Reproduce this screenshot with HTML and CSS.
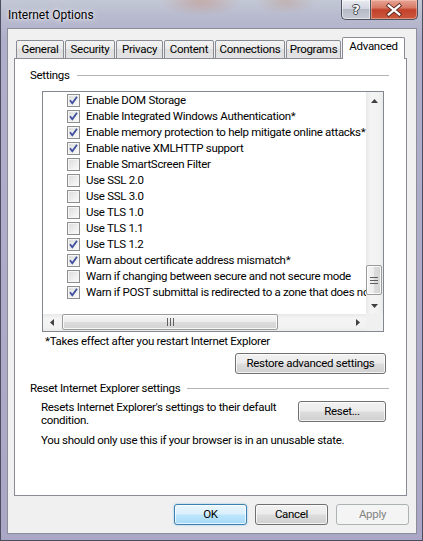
FILE: index.html
```html
<!DOCTYPE html>
<html>
<head>
<meta charset="utf-8">
<title>Internet Options</title>
<link rel="stylesheet" href="styles.css">
</head>
<body>
<div class="window">
  <div class="titlebar">
    <span class="title">Internet Options</span>
    <div class="caption-buttons">
      <div class="cap-btn cap-help"><span class="help-glyph">?</span></div>
      <div class="cap-btn cap-close">
        <svg width="48" height="20" viewBox="0 0 48 20">
          <path d="M18.5 5.5 L29.5 14.5 M29.5 5.5 L18.5 14.5" stroke="#5a2a22" stroke-width="4.2" stroke-linecap="square" fill="none"/>
          <path d="M18.5 5.5 L29.5 14.5 M29.5 5.5 L18.5 14.5" stroke="#ffffff" stroke-width="2.4" stroke-linecap="square" fill="none"/>
        </svg>
      </div>
    </div>
  </div>
  <div class="client">
    <div class="tabs">
      <div class="tab tab-general">General</div>
      <div class="tab tab-security">Security</div>
      <div class="tab tab-privacy">Privacy</div>
      <div class="tab tab-content">Content</div>
      <div class="tab tab-connections">Connections</div>
      <div class="tab tab-programs">Programs</div>
      <div class="tab tab-active">Advanced</div>
    </div>
    <div class="panel">
      <div class="group-head"><span>Settings</span><div class="group-line"></div></div>
      <div class="listbox">
        <div class="list-main">
          <div class="list-view">
            <div class="item"><span class="cb checked"><svg width="11" height="11" viewBox="0 0 11 11"><path d="M2 5.2 L4.3 8.3 L9 1.8" stroke="#3b4f9e" stroke-width="1.8" fill="none"/></svg></span>Enable DOM Storage</div>
            <div class="item"><span class="cb checked"><svg width="11" height="11" viewBox="0 0 11 11"><path d="M2 5.2 L4.3 8.3 L9 1.8" stroke="#3b4f9e" stroke-width="1.8" fill="none"/></svg></span>Enable Integrated Windows Authentication*</div>
            <div class="item"><span class="cb checked"><svg width="11" height="11" viewBox="0 0 11 11"><path d="M2 5.2 L4.3 8.3 L9 1.8" stroke="#3b4f9e" stroke-width="1.8" fill="none"/></svg></span>Enable memory protection to help mitigate online attacks*</div>
            <div class="item"><span class="cb checked"><svg width="11" height="11" viewBox="0 0 11 11"><path d="M2 5.2 L4.3 8.3 L9 1.8" stroke="#3b4f9e" stroke-width="1.8" fill="none"/></svg></span>Enable native XMLHTTP support</div>
            <div class="item"><span class="cb"></span>Enable SmartScreen Filter</div>
            <div class="item"><span class="cb"></span>Use SSL 2.0</div>
            <div class="item"><span class="cb"></span>Use SSL 3.0</div>
            <div class="item"><span class="cb"></span>Use TLS 1.0</div>
            <div class="item"><span class="cb"></span>Use TLS 1.1</div>
            <div class="item"><span class="cb checked"><svg width="11" height="11" viewBox="0 0 11 11"><path d="M2 5.2 L4.3 8.3 L9 1.8" stroke="#3b4f9e" stroke-width="1.8" fill="none"/></svg></span>Use TLS 1.2</div>
            <div class="item"><span class="cb checked"><svg width="11" height="11" viewBox="0 0 11 11"><path d="M2 5.2 L4.3 8.3 L9 1.8" stroke="#3b4f9e" stroke-width="1.8" fill="none"/></svg></span>Warn about certificate address mismatch*</div>
            <div class="item"><span class="cb"></span>Warn if changing between secure and not secure mode</div>
            <div class="item"><span class="cb checked"><svg width="11" height="11" viewBox="0 0 11 11"><path d="M2 5.2 L4.3 8.3 L9 1.8" stroke="#3b4f9e" stroke-width="1.8" fill="none"/></svg></span>Warn if POST submittal is redirected to a zone that does not permit posts</div>
          </div>
          <div class="vscroll">
            <div class="sb-arrow"><svg width="7" height="4" viewBox="0 0 7 4"><polygon points="0,4 3.5,0 7,4" fill="#404040"/></svg></div>
            <div class="v-before"></div>
            <div class="v-thumb">
              <svg width="8" height="7" viewBox="0 0 8 7"><path d="M0 0.5 H8 M0 3.5 H8 M0 6.5 H8" stroke="#5e5e5e" stroke-width="1"/></svg>
            </div>
            <div class="v-after"></div>
            <div class="sb-arrow"><svg width="7" height="4" viewBox="0 0 7 4"><polygon points="0,0 7,0 3.5,4" fill="#404040"/></svg></div>
          </div>
        </div>
        <div class="hscroll-row">
          <div class="hscroll">
            <div class="sb-arrow-h"><svg width="4" height="7" viewBox="0 0 4 7"><polygon points="4,0 4,7 0,3.5" fill="#404040"/></svg></div>
            <div class="h-thumb">
              <svg width="7" height="8" viewBox="0 0 7 8"><path d="M0.5 0 V8 M3.5 0 V8 M6.5 0 V8" stroke="#5e5e5e" stroke-width="1"/></svg>
            </div>
            <div class="h-after"></div>
            <div class="sb-arrow-h"><svg width="4" height="7" viewBox="0 0 4 7"><polygon points="0,0 0,7 4,3.5" fill="#404040"/></svg></div>
          </div>
          <div class="sb-corner"></div>
        </div>
      </div>
      <div class="note">*Takes effect after you restart Internet Explorer</div>
      <div class="restore-row"><button class="btn btn-restore">Restore advanced settings</button></div>
      <div class="group-head reset-head"><span>Reset Internet Explorer settings</span><div class="group-line"></div></div>
      <div class="reset-row">
        <p class="reset-text">Resets Internet Explorer's settings to their default<br>condition.</p>
        <button class="btn btn-reset">Reset...</button>
      </div>
      <p class="warn-text">You should only use this if your browser is in an unusable state.</p>
    </div>
    <div class="dialog-buttons">
      <button class="btn btn-dialog btn-default">OK</button>
      <button class="btn btn-dialog">Cancel</button>
      <button class="btn btn-dialog btn-disabled">Apply</button>
    </div>
  </div>
</div>
</body>
</html>
```

FILE: styles.css
```css
html, body {
  margin: 0;
  padding: 0;
}

body {
  width: 423px;
  height: 541px;
  overflow: hidden;
  font-family: Roboto, "Noto Sans", sans-serif;
  font-size: 11.5px;
  letter-spacing: -0.3px;
  color: #000;
}

.window {
  width: 423px;
  height: 541px;
  box-sizing: border-box;
  display: flex;
  flex-direction: column;
  border: 1px solid #4c4e60;
  border-top: none;
  background:
    radial-gradient(ellipse 40px 14px at 200px 2px, rgba(196, 140, 120, 0.45), rgba(196, 140, 120, 0)),
    radial-gradient(ellipse 30px 12px at 285px 2px, rgba(190, 150, 130, 0.4), rgba(190, 150, 130, 0)),
    linear-gradient(180deg, #c3c8d6 0px, #b9bccf 14px, #b0afca 40px, #aaa7c6 100%);
}

.titlebar {
  height: 28px;
  flex: none;
  display: flex;
  justify-content: space-between;
  align-items: flex-start;
}

.title {
  padding-left: 7px;
  line-height: 30px;
  font-size: 12px;
  letter-spacing: 0;
  color: #000;
  text-shadow: 0 0 6px rgba(255, 255, 255, 0.9), 0 0 3px rgba(255, 255, 255, 0.8);
}

.caption-buttons {
  display: flex;
  margin-right: 4px;
}

.cap-btn {
  height: 20px;
  box-sizing: border-box;
  border: 1px solid #4f535f;
  border-top: none;
  display: flex;
  align-items: center;
  justify-content: center;
}

.cap-help {
  width: 29px;
  border-right: none;
  border-radius: 0 0 0 5px;
  background: linear-gradient(180deg, #e9ebf0 0%, #d3d7e0 45%, #b5bac6 50%, #c6cad4 100%);
  box-shadow: inset 0 0 0 1px rgba(255, 255, 255, 0.5);
}

.help-glyph {
  font-family: "DejaVu Sans", sans-serif;
  font-weight: bold;
  font-size: 13px;
  letter-spacing: 0;
  line-height: 18px;
  color: #fff;
  text-shadow: 1px 0 0 #3e414a, -1px 0 0 #3e414a, 0 1px 0 #3e414a, 0 -1px 0 #3e414a;
}

.cap-close {
  width: 48px;
  border-radius: 0 0 5px 0;
  background: linear-gradient(180deg, #e8a495 0%, #d77a66 40%, #c2412a 52%, #cb5a3e 100%);
  box-shadow: inset 0 0 0 1px rgba(255, 210, 200, 0.45);
}

.cap-close svg {
  display: block;
}

.client {
  flex: 1;
  margin: 0 5px 6px 6px;
  border: 1px solid #8b8d98;
  background: #f0f0f0;
  display: flex;
  flex-direction: column;
}

/* Tabs */
.tabs {
  display: flex;
  align-items: flex-end;
  margin: 8px 0 -1px 8px;
  position: relative;
  z-index: 1;
}

.tab {
  height: 19px;
  box-sizing: border-box;
  margin-right: 1px;
  border: 1px solid #898c95;
  border-radius: 2px 2px 0 0;
  background: linear-gradient(180deg, #f3f3f3 0%, #ebebeb 45%, #dfdfdf 50%, #e4e4e4 100%);
  line-height: 17px;
  text-align: center;
  white-space: nowrap;
}

.tab-general { width: 48px; }
.tab-security { width: 50px; }
.tab-privacy { width: 47px; }
.tab-content { width: 50px; }
.tab-connections { width: 70px; }
.tab-programs { width: 55px; }

.tab-active {
  width: 63px;
  height: 22px;
  margin-right: 0;
  border-bottom: none;
  background: #fff;
  line-height: 17px;
  padding-bottom: 4px;
}

/* Panel */
.panel {
  height: 438px;
  box-sizing: border-box;
  margin: 0 9px 0 6px;
  border: 1px solid #898c95;
  background: #fff;
  display: flex;
  flex-direction: column;
}

.group-head {
  display: flex;
  align-items: center;
  height: 15px;
  line-height: 15px;
  margin-top: 9px;
  padding: 0 17px 0 15px;
  white-space: nowrap;
}

.group-line {
  flex: 1;
  height: 1px;
  margin-left: 7px;
  background: #b3b3b3;
}

.listbox {
  width: 342px;
  height: 241px;
  box-sizing: border-box;
  margin: 8px 0 0 27px;
  border: 1px solid #828790;
  display: flex;
  flex-direction: column;
}

.list-main {
  height: 222px;
  display: flex;
}

.list-view {
  flex: 1;
  min-width: 0;
  overflow: hidden;
}

.item {
  height: 16px;
  line-height: 16px;
  display: flex;
  align-items: center;
  white-space: nowrap;
}

.cb {
  flex: none;
  width: 13px;
  height: 13px;
  box-sizing: border-box;
  margin: 0 6px 0 24px;
  border: 1px solid #8e8f8f;
  background: linear-gradient(135deg, #d9dadb 0%, #eeeeee 55%, #fbfbfb 100%);
  box-shadow: inset 0 0 0 1px #f5f5f5;
  display: flex;
  align-items: center;
  justify-content: center;
}

.cb svg {
  display: block;
}

/* Scrollbars */
.vscroll {
  width: 17px;
  flex: none;
  display: flex;
  flex-direction: column;
  background: linear-gradient(90deg, #e8e8e8 0%, #f4f4f4 25%, #f2f2f2 75%, #ebebeb 100%);
}

.sb-arrow {
  height: 17px;
  flex: none;
  display: flex;
  align-items: center;
  justify-content: center;
}

.sb-arrow svg, .sb-arrow-h svg {
  display: block;
}

.v-before {
  height: 156px;
  flex: none;
}

.v-thumb {
  height: 30px;
  flex: none;
  box-sizing: border-box;
  margin: 0 1px 0 0;
  border: 1px solid #9a9a9a;
  border-radius: 2px;
  background: linear-gradient(90deg, #f6f6f6 0%, #ececec 50%, #dcdcdc 52%, #d4d4d4 100%);
  box-shadow: inset 0 0 0 1px rgba(255, 255, 255, 0.8);
  display: flex;
  align-items: center;
  justify-content: center;
}

.v-after {
  flex: 1;
}

.hscroll-row {
  height: 17px;
  flex: none;
  display: flex;
}

.hscroll {
  flex: 1;
  display: flex;
  background: linear-gradient(180deg, #e8e8e8 0%, #f4f4f4 25%, #f2f2f2 75%, #ebebeb 100%);
}

.sb-arrow-h {
  width: 17px;
  flex: none;
  display: flex;
  align-items: center;
  justify-content: center;
}

.h-thumb {
  width: 216px;
  flex: none;
  box-sizing: border-box;
  margin: 0 0 1px 2px;
  border: 1px solid #9a9a9a;
  border-radius: 2px;
  background: linear-gradient(180deg, #f6f6f6 0%, #ececec 50%, #dcdcdc 52%, #d4d4d4 100%);
  box-shadow: inset 0 0 0 1px rgba(255, 255, 255, 0.8);
  display: flex;
  align-items: center;
  justify-content: center;
}

.h-after {
  flex: 1;
}

.sb-corner {
  width: 17px;
  flex: none;
  background: #f0f0f0;
}

.note {
  margin-top: 2px;
  padding-left: 30px;
  line-height: 15px;
  white-space: nowrap;
}

.restore-row {
  display: flex;
  justify-content: flex-end;
  margin-top: 4px;
  padding-right: 20px;
}

.reset-head {
  margin-top: 7px;
}

.reset-row {
  display: flex;
  justify-content: space-between;
  align-items: flex-start;
  margin-top: 5px;
  padding: 0 20px 0 26px;
}

.reset-text {
  margin: 0;
  line-height: 13px;
  white-space: nowrap;
}

.warn-text {
  margin: 6px 0 0 0;
  padding-left: 26px;
  line-height: 15px;
  white-space: nowrap;
}

/* Buttons */
.btn {
  height: 21px;
  box-sizing: border-box;
  padding: 0;
  border: 1px solid #707070;
  border-radius: 3px;
  background: linear-gradient(180deg, #f2f2f2 0%, #ebebeb 48%, #dddddd 52%, #cfcfcf 100%);
  box-shadow: inset 0 0 0 1px rgba(255, 255, 255, 0.75);
  font-family: Roboto, "Noto Sans", sans-serif;
  font-size: 11.5px;
  letter-spacing: -0.3px;
  line-height: 19px;
  color: #000;
  text-align: center;
}

.btn-restore {
  width: 151px;
}

.btn-reset {
  width: 88px;
}

.dialog-buttons {
  display: flex;
  justify-content: flex-end;
  gap: 8px;
  margin: 8px 7px 0 0;
}

.btn-dialog {
  width: 73px;
}

.btn-default {
  border-color: #3c7fb1;
  background: linear-gradient(180deg, #eaf6fd 0%, #d9f0fc 48%, #bee6fd 52%, #a7d9f5 100%);
  box-shadow: inset 0 0 0 1px rgba(255, 255, 255, 0.7), 0 0 2px rgba(60, 160, 230, 0.6);
}

.btn-disabled {
  border-color: #adb2b5;
  background: #f4f4f4;
  box-shadow: none;
  color: #838383;
}
```
